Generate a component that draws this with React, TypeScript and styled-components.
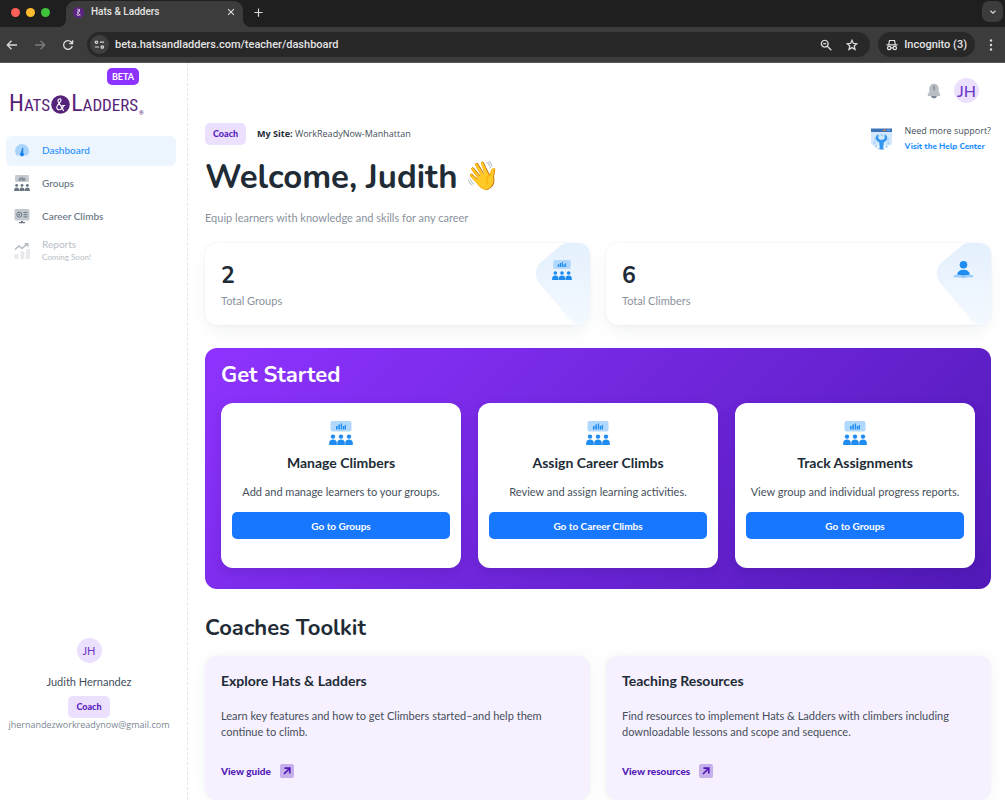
import React from "react";
import styled, { createGlobalStyle, css } from "styled-components";

const GlobalStyle = createGlobalStyle`
  *, *::before, *::after { box-sizing: border-box; }
  body {
    margin: 0;
    background: #fff;
    color: #212b36;
    font-family: Lato, "Liberation Sans", sans-serif;
    font-size: 11px;
    line-height: 16px;
  }
  h1, h2, h3, p { margin: 0; }
  button, input { font: inherit; }
  a { text-decoration: none; color: inherit; }
  svg { flex-shrink: 0; }
`;

const Shell = styled.div`
  display: flex;
  flex-direction: column;
  min-height: 100vh;
`;

/* ---------- Browser window ---------- */

const Browser = styled.header`
  background: #3c3c3c;
  border-bottom: 1px solid #555;
  color: #e3e3e3;
  font-family: Roboto, "Liberation Sans", sans-serif;
`;

const TabStrip = styled.div`
  display: flex;
  align-items: center;
  height: 27px;
  padding: 0 2px 0 11px;
  background: #1f1f1f;
`;

const Lights = styled.div`
  display: flex;
  gap: 6px;
  width: 55px;
  padding-bottom: 2px;
`;

const Light = styled.span<{ $color: string }>`
  width: 9px;
  height: 9px;
  border-radius: 50%;
  background: ${(p) => p.$color};
`;

const Tab = styled.div`
  position: relative;
  display: flex;
  align-items: center;
  gap: 7px;
  align-self: flex-end;
  width: 177px;
  height: 26px;
  padding: 0 7px 4px;
  border-radius: 9px 9px 0 0;
  background: #3c3c3c;
  font-size: 10px;
  font-weight: 500;

  &::before, &::after {
    content: "";
    position: absolute;
    bottom: 0;
    width: 8px;
    height: 8px;
  }
  &::before {
    right: 100%;
    background: radial-gradient(circle at 0 0, transparent 8px, #3c3c3c 8px);
  }
  &::after {
    left: 100%;
    background: radial-gradient(circle at 100% 0, transparent 8px, #3c3c3c 8px);
  }
`;

const TabTitle = styled.span`
  flex: 1;
`;

const ChromeButton = styled.button`
  display: grid;
  place-items: center;
  padding: 0;
  border: 0;
  background: none;
  color: inherit;
`;

const NewTab = styled(ChromeButton)`
  margin: 0 auto 3px 10px;
`;

const TabSearch = styled(ChromeButton)`
  align-self: flex-start;
  width: 21px;
  height: 21px;
  margin-top: 1px;
  border-radius: 7px;
  background: #3c3c3c;
`;

const Toolbar = styled.div`
  display: flex;
  align-items: center;
  height: 35px;
  padding: 0 10px 0 6px;
`;

const NavButtons = styled.div`
  display: flex;
  gap: 16px;
  margin-right: 13px;
`;

const Omnibox = styled.div`
  display: flex;
  flex: 1;
  align-items: center;
  gap: 14px;
  height: 25px;
  padding: 0 12px 0 3px;
  border-radius: 13px;
  background: #282828;
`;

const SiteInfo = styled(ChromeButton)`
  width: 19px;
  height: 19px;
  border-radius: 50%;
  background: #3f3f3f;
`;

const Address = styled.input`
  flex: 1;
  min-width: 0;
  margin-left: -8px;
  padding: 0;
  border: 0;
  outline: 0;
  background: none;
  color: #e3e3e3;
  font-size: 11px;
  font-weight: 500;
`;

const Incognito = styled.div`
  display: flex;
  align-items: center;
  gap: 6px;
  height: 25px;
  margin: 0 12px 0 8px;
  padding: 0 8px;
  border-radius: 13px;
  background: #282828;
  font-size: 11px;
  font-weight: 500;
`;

/* ---------- Page frame ---------- */

const Page = styled.div`
  display: flex;
  flex: 1;
`;

const Sidebar = styled.aside`
  display: flex;
  flex-direction: column;
  flex: 0 0 188px;
  width: 188px;
  padding: 5px 11px 68px 6px;
  border-right: 1px dashed #e3e7eb;
`;

const Brand = styled.div`
  display: flex;
  flex-direction: column;
  gap: 5px;
  width: 133px;
  padding-left: 3px;
  margin-bottom: 18px;
`;

const Beta = styled.span`
  align-self: flex-end;
  padding: 0 5px;
  border-radius: 5px;
  background: #8e33ff;
  color: #fff;
  font-size: 9px;
  font-weight: 700;
  line-height: 17px;
`;

const Logo = styled.a`
  display: flex;
  align-items: center;
  gap: 1px;
  height: 28px;
  color: #56237a;
  font-family: "Roboto Condensed", "Open Sans Condensed", sans-serif;
  font-size: 17px;
  line-height: 28px;
`;

const LogoInitial = styled.span`
  font-size: 24px;
`;

const LogoMark = styled.small`
  align-self: flex-end;
  font-size: 6px;
  line-height: 10px;
`;

const Nav = styled.nav`
  display: flex;
  flex-direction: column;
  gap: 3px;
`;

const NavItem = styled.a<{ $active?: boolean; $muted?: boolean }>`
  display: flex;
  align-items: center;
  gap: 12px;
  min-height: 30px;
  padding: 0 8px 2px;
  border-radius: 6px;
  color: #637381;
  font-size: 10px;
  font-weight: 500;
  line-height: 14px;
  ${(p) => p.$active && css`
    background: #edf5ff;
    color: #1e90ff;
  `}
  ${(p) => p.$muted && css`
    min-height: 32px;
    color: #bcc2c9;
  `}
`;

const NavLabel = styled.span`
  display: flex;
  flex-direction: column;
`;

const NavNote = styled.small`
  font-size: 8px;
  line-height: 12px;
`;

const Profile = styled.div`
  display: flex;
  flex-direction: column;
  align-items: center;
  margin-top: auto;
  margin-right: 4px;
`;

const Avatar = styled.span<{ $large?: boolean }>`
  display: grid;
  place-items: center;
  width: 25px;
  height: 25px;
  border-radius: 50%;
  background: #ebe0fe;
  color: #6a35c9;
  font-size: ${(p) => (p.$large ? 16 : 11)}px;
`;

const ProfileName = styled.p`
  margin: 11px 0 6px;
  color: #454f5b;
  font-size: 11px;
`;

const ProfileMail = styled.p`
  color: #7b8794;
  font-family: "Open Sans", sans-serif;
  font-size: 9px;
  line-height: 14px;
`;

const Badge = styled.span`
  padding: 0 8px;
  border-radius: 5px;
  background: #ebe0fe;
  color: #5b22c0;
  font-size: 9px;
  font-weight: 900;
  line-height: 22px;
`;

const Main = styled.main`
  flex: 1;
  min-width: 0;
  padding: 15px 14px 0 17px;
`;

const TopBar = styled.div`
  display: flex;
  align-items: center;
  justify-content: flex-end;
  gap: 13px;
  padding-right: 12px;
`;

const Intro = styled.section`
  display: flex;
  align-items: flex-start;
  justify-content: space-between;
  margin-top: 20px;
`;

const SiteLine = styled.div`
  display: flex;
  align-items: center;
  gap: 11px;
`;

const SiteName = styled.span`
  color: #454f5b;
  font-family: "Open Sans", sans-serif;
  font-size: 9px;

  b { color: #212b36; }
`;

const Title = styled.h1`
  display: flex;
  align-items: center;
  gap: 8px;
  margin-top: 10px;
  font-family: Nunito, sans-serif;
  font-size: 33px;
  font-weight: 700;
  line-height: 42px;
`;

const Wave = styled.span`
  padding-bottom: 3px;
  font-family: "Noto Color Emoji", sans-serif;
  font-size: 28px;
`;

const Subtitle = styled.p`
  margin-top: 10px;
  color: #8a929c;
`;

const Support = styled.div`
  display: flex;
  align-items: center;
  gap: 12px;
  color: #454f5b;
  font-family: "Open Sans", sans-serif;
  font-size: 9px;
`;

const SupportLink = styled.a`
  display: block;
  color: #1e90ff;
  font-family: Nunito, sans-serif;
  font-size: 8px;
  font-weight: 800;
`;

const Columns = styled.div<{ $count: number; $gap: number }>`
  display: grid;
  grid-template-columns: repeat(${(p) => p.$count}, minmax(0, 1fr));
  gap: ${(p) => p.$gap}px;
`;

const Stats = styled(Columns)`
  margin: 17px 0 23px;
`;

const StatCard = styled.article`
  position: relative;
  padding: 16px;
  border-radius: 12px;
  background: #fff;
  box-shadow: 0 0 2px rgba(145, 158, 171, 0.2), 0 8px 18px -4px rgba(145, 158, 171, 0.16);
  overflow: hidden;
`;

const StatValue = styled.p`
  font-family: Nunito, sans-serif;
  font-size: 23px;
  font-weight: 700;
  line-height: 34px;
`;

const StatLabel = styled.p`
  color: #8a929c;
`;

const StatCorner = styled.div`
  position: absolute;
  top: 0;
  right: 0;
  height: 100%;
`;

const StatIcon = styled.div`
  position: absolute;
  top: 17px;
  right: 18px;
`;

const GetStarted = styled.section`
  padding: 15px 16px 21px;
  border-radius: 12px;
  background: linear-gradient(135deg, #8e33ff 0%, #5119b7 100%);
`;

const SectionTitle = styled.h2<{ $light?: boolean }>`
  color: ${(p) => (p.$light ? "#fff" : "#212b36")};
  font-family: Nunito, sans-serif;
  font-size: 22px;
  font-weight: 700;
  line-height: 24px;
`;

const Steps = styled(Columns)`
  margin-top: 16px;
`;

const StepCard = styled.article`
  display: flex;
  flex-direction: column;
  align-items: center;
  padding: 18px 11px 29px;
  border-radius: 12px;
  background: #fff;
  box-shadow: 0 4px 12px rgba(40, 10, 100, 0.16);
  text-align: center;
`;

const CardTitle = styled.h3`
  font-size: 14px;
  font-weight: 700;
  line-height: 20px;
`;

const CardText = styled.p`
  color: #454f5b;
`;

const StepTitle = styled(CardTitle)`
  margin: 8px 0 11px;
`;

const StepButton = styled.button`
  align-self: stretch;
  height: 27px;
  margin-top: 12px;
  padding: 0;
  border: 0;
  border-radius: 5px;
  background: #1877ff;
  color: #fff;
  font-size: 10px;
  font-weight: 700;
`;

const Toolkit = styled.section`
  margin-top: 27px;
`;

const ToolkitGrid = styled(Columns)`
  margin-top: 16px;
`;

const ToolkitCard = styled.article`
  padding: 15px 16px 20px;
  border-radius: 12px;
  background: #f6f0ff;
  box-shadow: 0 0 2px rgba(145, 158, 171, 0.1), 0 0 14px rgba(145, 158, 171, 0.1);
`;

const ToolkitText = styled(CardText)`
  margin: 17px 0 22px;
`;

const ToolkitLink = styled.a`
  display: flex;
  align-items: center;
  gap: 9px;
  color: #5119b7;
  font-size: 10px;
  font-weight: 900;
  line-height: 18px;
`;

/* ---------- Icons ---------- */

type Tone = { main: string; soft: string };
const blue: Tone = { main: "#1e8cf0", soft: "#b0d8fc" };
const slate: Tone = { main: "#6b7683", soft: "#c6cbd1" };

const GroupIcon = ({ size, tone = blue }: { size: number; tone?: Tone }) => (
  <svg width={size} height={size} viewBox="0 0 24 24" aria-hidden="true">
    <rect x="1.5" width="21" height="10.5" rx="2" fill={tone.soft} />
    <path d="M7 5h1.6v3.5H7zM9.400 3.500H11v5H9.400zM11.800 2.500h1.300v6h-1.300zM13.800 5h1.500v3.500h-1.500zM15.800 4h1.200v4.500h-1.200z" fill={tone.main} />
    {[4, 12, 20].map((x) => (
      <g key={x} fill={tone.main}>
        <circle cx={x} cy="15.6" r="2.2" />
        <path d={`M${x - 3.8} 24v-1.800c0-2.200 1.400-3.600 3.800-3.600s3.800 1.400 3.800 3.600V24z`} />
      </g>
    ))}
  </svg>
);

const ReaderIcon = () => (
  <svg width="20" height="20" viewBox="0 0 20 20" aria-hidden="true">
    <circle cx="10.500" cy="4.800" r="3.800" fill={blue.main} />
    <path d="M4 14.500c.6-3 3-4.800 6.500-4.800s5.900 1.800 6.500 4.800l-6.500 1.200z" fill={blue.main} />
    <path d="M.8 15.300c3-.6 6.500-.4 9.700.8 3.200-1.200 6.500-1.400 9.500-.8v2.300c-3-.5-6.500-.4-9.500.7-3-1.100-6.700-1.200-9.700-.7z" fill="#9acbfa" />
  </svg>
);

const GaugeIcon = () => (
  <svg width="16" height="16" viewBox="0 0 16 16" aria-hidden="true">
    <path d="M2.600 13.500A7 7 0 1 1 13.400 13.500z" fill="#a9d3fb" />
    <path d="M8.700 5.500c.5 0 .6.300.6.700l-.1 4.500a2 2 0 1 1-2.300-.1l1.300-4.600c.1-.3.200-.5.500-.5z" fill="#1883ee" />
  </svg>
);

const MonitorIcon = () => (
  <svg width="16" height="16" viewBox="0 0 16 16" aria-hidden="true">
    <rect x=".5" y="1" width="15" height="11.500" rx="1.500" fill="#c3c9cf" />
    <circle cx="5.300" cy="6.700" r="2.500" fill="none" stroke="#6b7683" strokeWidth="1" />
    <circle cx="5.300" cy="6.700" r=".9" fill="#6b7683" />
    <path d="M9.500 4.500h4M9.500 6.700h4M9.500 8.900h4" stroke="#6b7683" strokeWidth="1" />
    <path d="M7 13h2v1h2v1.300H5V14h2z" fill="#6b7683" />
  </svg>
);

const ChartIcon = () => (
  <svg width="16" height="17" viewBox="0 0 16 17" aria-hidden="true">
    <path d="M.5 12h4v5h-4zM6.500 9.500h4V17h-4zM12 7h4v10h-4z" fill="#e7e9ec" />
    <path d="M1 7.500 5 4l3 2.500L13 2" fill="none" stroke="#b4bac1" strokeWidth="1.500" />
    <path d="M10 1h4.500v4.500z" fill="#b4bac1" />
  </svg>
);

const BellIcon = () => (
  <svg width="14" height="16" viewBox="0 0 14 16" aria-hidden="true">
    <path d="M4 13h6c-.4 1.500-1.500 2.300-3 2.300S4.400 14.500 4 13z" fill="#7d8793" />
    <path d="M7 .8c3 0 4.700 2.200 4.700 5v2.700l1.500 2.700c.4.900 0 1.800-1 1.800H1.800c-1 0-1.400-.9-1-1.800l1.500-2.700V5.800C2.300 3 4 .8 7 .8z" fill="#b9bec5" />
    <path d="M7 3.300v3.500" stroke="#7d8793" strokeWidth="1.300" strokeLinecap="round" />
  </svg>
);

const SupportIcon = () => (
  <svg width="21" height="22" viewBox="0 0 21 22" aria-hidden="true">
    <path d="M0 4h21v11c0 1.500-1 2.500-2.500 2.500h-16C1 17.500 0 16.500 0 15z" fill="#d3e8fc" />
    <path d="M0 .5h21V4H0z" fill="#3f73b8" />
    <path d="M12 2.300h3" stroke="#d9863b" strokeWidth="1.300" />
    <path d="M16 2.300h3" stroke="#5fa6ea" strokeWidth="1.300" />
    <circle cx="10.500" cy="14" r="7" fill="none" stroke="#a4d0f8" strokeWidth="2" strokeDasharray="2.400 1.600" />
    <path d="M7.300 6.300c-3.400 1.400-3.400 6.300.9 7.900l.6 6.300c.2 1.500 3.200 1.500 3.400 0l.6-6.300c4.300-1.600 4.300-6.500.9-7.900v4l-1.700 1.500H9l-1.700-1.500z" fill="#3496f2" />
  </svg>
);

const StatShape = () => (
  <svg width="55" height="100%" viewBox="0 0 55 82" preserveAspectRatio="none" aria-hidden="true">
    <defs>
      <linearGradient id="stat-shape" x1="0" y1="0" x2="0" y2="1">
        <stop offset="0" stopColor="#e4f0fd" />
        <stop offset="1" stopColor="#f4f9ff" />
      </linearGradient>
    </defs>
    <path d="M33 0H55V82H44Q40 82 37 79L4 40Q-3 29 5 20L24 4Q28 0 33 0z" fill="url(#stat-shape)" />
  </svg>
);

const OpenIcon = () => (
  <svg width="14" height="14" viewBox="0 0 14 14" aria-hidden="true">
    <rect width="14" height="14" rx="2" fill="#c5b0ec" />
    <path d="M4.500 4.200h5.300v5.300M9.500 4.500 4 10" fill="none" stroke="#5119b7" strokeWidth="1.700" />
  </svg>
);

const Line = ({ d, size = 12, dim }: { d: string; size?: number; dim?: boolean }) => (
  <svg width={size} height={size} viewBox="0 0 12 12" fill="none" stroke={dim ? "#7c7c7c" : "#dadada"} strokeWidth="1.300" aria-hidden="true">
    <path d={d} />
  </svg>
);

const Favicon = () => (
  <svg width="11" height="11" viewBox="0 0 11 11" aria-hidden="true">
    <circle cx="5.500" cy="5.500" r="5.500" fill="#5b2483" />
    <path d="M5 1.500v3.800M6.500 2v3M5 3.400h1.500M7.500 8.800 4.400 5.900c-.5-.8 1.600-1 1.200.1L4 7.400c-.5 1.500 2 1.800 3.200-.5" fill="none" stroke="#e6d8ef" strokeWidth=".8" />
  </svg>
);

const LogoBadge = () => (
  <svg width="19" height="19" viewBox="0 0 19 19" aria-hidden="true">
    <circle cx="9.500" cy="9.500" r="9.300" fill="#56237a" />
    <path d="M12.500 15.500 7.200 6.800C6 4 10.200 2.700 10 5.200c0 2-4 4-4.200 7 0 3.500 5 3.800 6.800-1.700M11 10.500h2.700" fill="none" stroke="#fff" strokeWidth="1.200" strokeLinecap="round" />
  </svg>
);

const IncognitoIcon = () => (
  <svg width="12" height="12" viewBox="0 0 12 12" fill="none" stroke="#e3e3e3" strokeWidth="1.200" aria-hidden="true">
    <path d="M.5 5.800h11M2.700 5.500l.8-4h5l.8 4M4.900 8.800h2.200" />
    <circle cx="3.200" cy="9" r="1.700" />
    <circle cx="8.800" cy="9" r="1.700" />
  </svg>
);

/* ---------- Content ---------- */

const stats = [
  { value: 2, label: "Total Groups", icon: <GroupIcon size={20} /> },
  { value: 6, label: "Total Climbers", icon: <ReaderIcon /> },
];

const steps = [
  { title: "Manage Climbers", text: "Add and manage learners to your groups.", action: "Go to Groups" },
  { title: "Assign Career Climbs", text: "Review and assign learning activities.", action: "Go to Career Climbs" },
  { title: "Track Assignments", text: "View group and individual progress reports.", action: "Go to Groups" },
];

const toolkit = [
  {
    title: "Explore Hats & Ladders",
    text: "Learn key features and how to get Climbers started–and help them continue to climb.",
    action: "View guide",
  },
  {
    title: "Teaching Resources",
    text: "Find resources to implement Hats & Ladders with climbers including downloadable lessons and scope and sequence.",
    action: "View resources",
  },
];

const BrowserBar = () => (
  <Browser>
    <TabStrip>
      <Lights>
        <Light $color="#fe5f57" />
        <Light $color="#febc2e" />
        <Light $color="#3fc53c" />
      </Lights>
      <Tab>
        <Favicon />
        <TabTitle>Hats &amp; Ladders</TabTitle>
        <ChromeButton aria-label="Close tab"><Line size={10} d="M2.500 2.500l7 7M9.500 2.500l-7 7" /></ChromeButton>
      </Tab>
      <NewTab aria-label="New tab"><Line size={11} d="M6 1.500v9M1.500 6h9" /></NewTab>
      <TabSearch aria-label="Search tabs"><Line size={10} d="M3 4.500l3 3 3-3" /></TabSearch>
    </TabStrip>
    <Toolbar>
      <NavButtons>
        <ChromeButton aria-label="Back"><Line d="M11 6H1.500M5.500 1.800 1.300 6l4.200 4.200" /></ChromeButton>
        <ChromeButton aria-label="Forward"><Line dim d="M1 6h9.500M6.500 1.800 10.700 6l-4.200 4.200" /></ChromeButton>
        <ChromeButton aria-label="Reload"><Line d="M10.300 7A4.400 4.400 0 1 1 9.300 3L10.500 4.300M10.600 1.200v3.300H7.300" /></ChromeButton>
      </NavButtons>
      <Omnibox>
        <SiteInfo aria-label="Site information">
          <Line d="M6.500 3.500H11M1 8.700h4.500M2.600 2.200a1.300 1.300 0 1 0 .1 0M9 7.400a1.300 1.300 0 1 0 .1 0" size={11} />
        </SiteInfo>
        <Address aria-label="Address" defaultValue="beta.hatsandladders.com/teacher/dashboard" />
        <ChromeButton aria-label="Zoom"><Line d="M4.700 1.300a3.400 3.400 0 1 0 .1 0M7.300 7.300l4 4M3.200 4.700h3" /></ChromeButton>
        <ChromeButton aria-label="Bookmark"><Line d="M6 1.300l1.400 3.100 3.400.3-2.600 2.300.8 3.400L6 8.600l-3 1.800.8-3.400L1.200 4.700l3.400-.3z" /></ChromeButton>
      </Omnibox>
      <Incognito><IncognitoIcon />Incognito (3)</Incognito>
      <ChromeButton aria-label="Menu">
        <svg width="8" height="12" viewBox="0 0 8 12" fill="#dadada" aria-hidden="true">
          <circle cx="4" cy="1.500" r="1.200" /><circle cx="4" cy="6" r="1.200" /><circle cx="4" cy="10.500" r="1.200" />
        </svg>
      </ChromeButton>
    </Toolbar>
  </Browser>
);

const SideNav = () => (
  <Sidebar>
    <Brand>
      <Beta>BETA</Beta>
      <Logo href="#home">
        <span><LogoInitial>H</LogoInitial>ATS</span>
        <LogoBadge />
        <span><LogoInitial>L</LogoInitial>ADDERS</span>
        <LogoMark>®</LogoMark>
      </Logo>
    </Brand>
    <Nav>
      <NavItem href="#dashboard" $active><GaugeIcon />Dashboard</NavItem>
      <NavItem href="#groups"><GroupIcon size={16} tone={slate} />Groups</NavItem>
      <NavItem href="#climbs"><MonitorIcon />Career Climbs</NavItem>
      <NavItem href="#reports" $muted>
        <ChartIcon />
        <NavLabel>Reports<NavNote>Coming Soon!</NavNote></NavLabel>
      </NavItem>
    </Nav>
    <Profile>
      <Avatar>JH</Avatar>
      <ProfileName>Judith Hernandez</ProfileName>
      <Badge>Coach</Badge>
      <ProfileMail>jhernandezworkreadynow@gmail.com</ProfileMail>
    </Profile>
  </Sidebar>
);

export default function App() {
  return (
    <Shell>
      <GlobalStyle />
      <BrowserBar />
      <Page>
        <SideNav />
        <Main>
          <TopBar>
            <ChromeButton aria-label="Notifications"><BellIcon /></ChromeButton>
            <Avatar $large>JH</Avatar>
          </TopBar>
          <Intro>
            <div>
              <SiteLine>
                <Badge>Coach</Badge>
                <SiteName><b>My Site:</b> WorkReadyNow-Manhattan</SiteName>
              </SiteLine>
              <Title>Welcome, Judith <Wave>👋</Wave></Title>
              <Subtitle>Equip learners with knowledge and skills for any career</Subtitle>
            </div>
            <Support>
              <SupportIcon />
              <div>
                Need more support?
                <SupportLink href="#help">Visit the Help Center</SupportLink>
              </div>
            </Support>
          </Intro>
          <Stats $count={2} $gap={16}>
            {stats.map((s) => (
              <StatCard key={s.label}>
                <StatCorner><StatShape /></StatCorner>
                <StatIcon>{s.icon}</StatIcon>
                <StatValue>{s.value}</StatValue>
                <StatLabel>{s.label}</StatLabel>
              </StatCard>
            ))}
          </Stats>
          <GetStarted>
            <SectionTitle $light>Get Started</SectionTitle>
            <Steps $count={3} $gap={17}>
              {steps.map((s) => (
                <StepCard key={s.title}>
                  <GroupIcon size={24} />
                  <StepTitle>{s.title}</StepTitle>
                  <CardText>{s.text}</CardText>
                  <StepButton>{s.action}</StepButton>
                </StepCard>
              ))}
            </Steps>
          </GetStarted>
          <Toolkit>
            <SectionTitle>Coaches Toolkit</SectionTitle>
            <ToolkitGrid $count={2} $gap={16}>
              {toolkit.map((t) => (
                <ToolkitCard key={t.title}>
                  <CardTitle>{t.title}</CardTitle>
                  <ToolkitText>{t.text}</ToolkitText>
                  <ToolkitLink href="#toolkit">{t.action}<OpenIcon /></ToolkitLink>
                </ToolkitCard>
              ))}
            </ToolkitGrid>
          </Toolkit>
        </Main>
      </Page>
    </Shell>
  );
}
